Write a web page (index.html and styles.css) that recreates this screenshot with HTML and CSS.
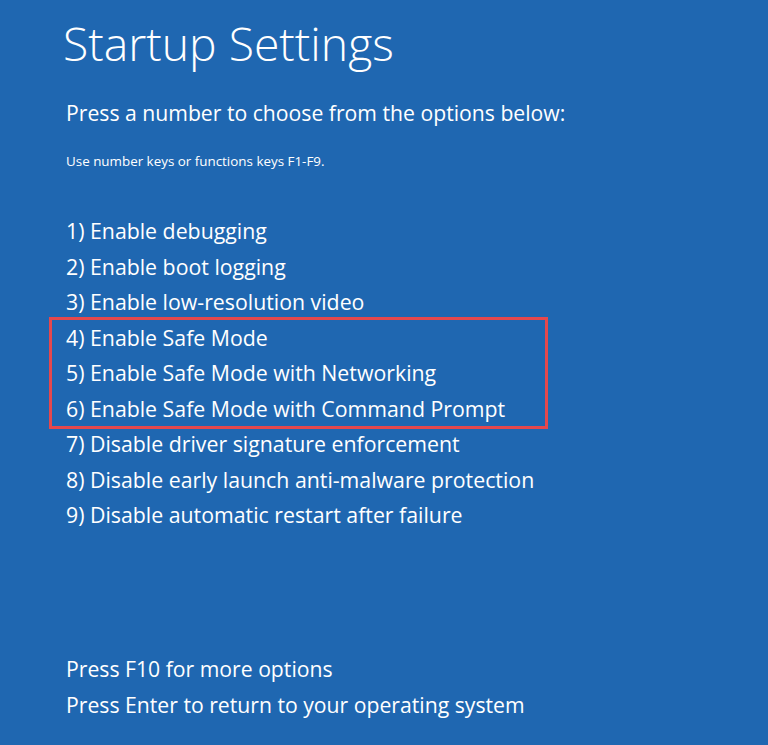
FILE: index.html
```html
<!DOCTYPE html>
<html lang="en">
<head>
    <meta charset="UTF-8">
    <title>Startup Settings</title>
    <link rel="stylesheet" href="styles.css">
</head>
<body>
    <div class="screen">
        <h1>Startup Settings</h1>
        <p class="prompt">Press a number to choose from the options below:</p>
        <p class="hint">Use number keys or functions keys F1-F9.</p>
        <ul class="options">
            <li>1) Enable debugging</li>
            <li>2) Enable boot logging</li>
            <li>3) Enable low-resolution video</li>
            <li class="group">
                <ul>
                    <li>4) Enable Safe Mode</li>
                    <li>5) Enable Safe Mode with Networking</li>
                    <li>6) Enable Safe Mode with Command Prompt</li>
                </ul>
            </li>
            <li>7) Disable driver signature enforcement</li>
            <li>8) Disable early launch anti-malware protection</li>
            <li>9) Disable automatic restart after failure</li>
        </ul>
        <div class="footer">
            <p>Press F10 for more options</p>
            <p>Press Enter to return to your operating system</p>
        </div>
    </div>
</body>
</html>
```

FILE: styles.css
```css
body {
    margin: 0;
    background: #1f67b1;
    color: #ffffff;
    font-family: "Open Sans", "Noto Sans", sans-serif;
}

.screen {
    height: 745px;
    padding-left: 66px;
    box-sizing: border-box;
    overflow: hidden;
}

h1 {
    margin: 0;
    padding-top: 14px;
    margin-left: -3px;
    font-size: 46.3px;
    font-weight: 300;
    line-height: 60px;
}

.prompt {
    margin: 24px 0 0;
    font-size: 21.2px;
    line-height: 30px;
}

.hint {
    margin: 23px 0 0;
    font-size: 13.4px;
    line-height: 20px;
}

.options {
    list-style: none;
    margin: 42px 0 0;
    padding: 0;
    font-size: 21.3px;
    line-height: 35.5px;
}

.options ul {
    list-style: none;
    margin: 0;
    padding: 0;
}

.group {
    width: 479px;
    margin: -3px 0 -3px -17px;
    padding-left: 14px;
    border: 3px solid #e5484d;
}

.footer {
    margin-top: 118px;
    font-size: 21.2px;
    line-height: 36px;
}

.footer p {
    margin: 0;
}
```
